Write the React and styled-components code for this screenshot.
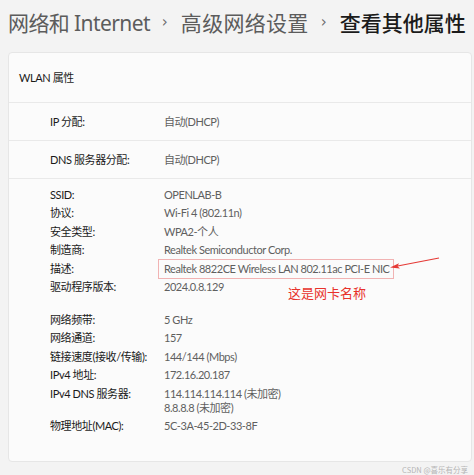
import React from 'react';
import styled, { createGlobalStyle } from 'styled-components';

const GlobalStyle = createGlobalStyle`
  html, body {
    margin: 0;
    padding: 0;
    background: #f3f3f3;
  }
  body {
    font-family: Lato, 'Noto Sans CJK SC', sans-serif;
    width: 474px;
    height: 475px;
    overflow: hidden;
  }
`;

const Page = styled.div`
  display: flex;
  flex-direction: column;
  padding: 0 2px 0 8px;
  height: 475px;
  box-sizing: border-box;
`;

const Breadcrumb = styled.div`
  display: flex;
  align-items: center;
  height: 52px;
  padding-bottom: 8px;
  box-sizing: border-box;
  font-family: 'Noto Sans', 'Noto Sans CJK SC', sans-serif;
  font-size: 21px;
  white-space: nowrap;
`;

const Crumb = styled.span`
  color: ${p => (p.$current ? '#1b1b1b' : '#5c5c5c')};
  font-weight: ${p => (p.$current ? 500 : 400)};
  letter-spacing: ${p => p.$spacing || 0}px;
`;

const Chevron = styled.span`
  color: #6a6a6a;
  font-size: 15px;
  margin: 0 13px 0 12px;
  font-family: 'DejaVu Sans', sans-serif;
`;

const Card = styled.div`
  position: relative;
  background: #fbfbfb;
  border: 1px solid #e6e6e6;
  border-radius: 4px;
  height: 410px;
  display: flex;
  flex-direction: column;
`;

const Section = styled.div`
  display: flex;
  align-items: center;
  height: ${p => p.$h}px;
  padding-left: ${p => p.$indent}px;
  border-bottom: 1.5px solid #e9e9e9;
  font-size: 11px;
  letter-spacing: -0.4px;
  color: #1a1a1a;
`;

const Details = styled.div`
  position: relative;
  flex: 1;
  padding: 9px 0 0 41px;
  display: flex;
  flex-direction: column;
  gap: 18.5px;
`;

const Group = styled.div`
  display: grid;
  grid-template-columns: 114px 1fr;
  row-gap: 4.5px;
  font-size: 11px;
  line-height: 14px;
  letter-spacing: -0.4px;
`;

const Label = styled.div`
  color: #1a1a1a;
  white-space: nowrap;
`;

const Value = styled.div`
  color: #5f5f5f;
  white-space: nowrap;
  letter-spacing: -0.45px;
`;

const Inline = styled.div`
  display: flex;
  align-items: center;
  width: 114px;
`;

const Highlight = styled.span`
  display: inline-block;
  margin: -3px 0 -3px -6px;
  padding: 2px 3px 2px 5px;
  border: 1px solid #f1b3b3;
`;

const Note = styled.div`
  position: absolute;
  left: 279px;
  top: 104px;
  font-family: 'Noto Sans CJK SC', sans-serif;
  font-size: 13px;
  color: #e8322b;
`;

const Arrow = styled.svg`
  position: absolute;
  left: 372px;
  top: 77px;
`;

const Watermark = styled.div`
  align-self: flex-end;
  margin: 2px 4px 0 0;
  font-family: 'Noto Sans CJK SC', sans-serif;
  font-size: 7.5px;
  color: #b5b5b5;
`;

const groupA = [
  ['SSID:', 'OPENLAB-B'],
  ['协议:', 'Wi-Fi 4 (802.11n)'],
  ['安全类型:', 'WPA2-个人'],
  ['制造商:', 'Realtek Semiconductor Corp.'],
  ['描述:', 'Realtek 8822CE Wireless LAN 802.11ac PCI-E NIC', true],
  ['驱动程序版本:', '2024.0.8.129'],
];

const groupB = [
  ['网络频带:', '5 GHz'],
  ['网络通道:', '157'],
  ['链接速度(接收/传输):', '144/144 (Mbps)'],
  ['IPv4 地址:', '172.16.20.187'],
  ['IPv4 DNS 服务器:', ['114.114.114.114 (未加密)', '8.8.8.8 (未加密)']],
  ['物理地址(MAC):', '5C-3A-45-2D-33-8F'],
];

const renderRows = rows =>
  rows.map(([label, value, mark]) => (
    <React.Fragment key={label}>
      <Label>{label}</Label>
      <Value>
        {Array.isArray(value)
          ? value.map(v => <div key={v}>{v}</div>)
          : mark
          ? <Highlight>{value}</Highlight>
          : value}
      </Value>
    </React.Fragment>
  ));

export default function App() {
  return (
    <>
      <GlobalStyle />
      <Page>
        <Breadcrumb>
          <Crumb $spacing={-0.6}>网络和 Internet</Crumb>
          <Chevron>›</Chevron>
          <Crumb $spacing={0.3}>高级网络设置</Crumb>
          <Chevron>›</Chevron>
          <Crumb $current>查看其他属性</Crumb>
        </Breadcrumb>
        <Card>
          <Section $h={49} $indent={10}>WLAN 属性</Section>
          <Section $h={37} $indent={41}>
            <Inline>IP 分配:</Inline>
            <Value>自动(DHCP)</Value>
          </Section>
          <Section $h={37} $indent={41}>
            <Inline>DNS 服务器分配:</Inline>
            <Value>自动(DHCP)</Value>
          </Section>
          <Details>
            <Group>{renderRows(groupA)}</Group>
            <Group>{renderRows(groupB)}</Group>
            <Note>这是网卡名称</Note>
            <Arrow width="60" height="20" viewBox="0 0 60 20">
              <path d="M58 2 L14 10.5" stroke="#e53935" strokeWidth="1.2" fill="none" />
              <path d="M9 11.6 L18 7.2 L16.5 10.2 L19 12.4 Z" fill="#e53935" />
            </Arrow>
          </Details>
        </Card>
        <Watermark>CSDN @喜乐有分享</Watermark>
      </Page>
    </>
  );
}
